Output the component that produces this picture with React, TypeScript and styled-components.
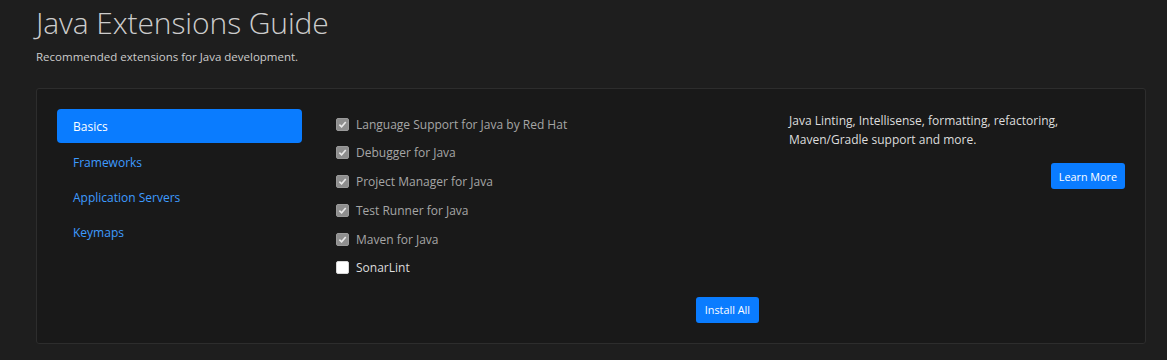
import React from "react"
import styled, { createGlobalStyle } from "styled-components"

const GlobalStyle = createGlobalStyle`
    body {
        margin: 0;
        background: #1e1e1e;
        color: #cccccc;
        font-family: "Open Sans", "Noto Sans", sans-serif;
        font-size: 13px;
    }
`

const Page = styled.div`
    padding: 0 21px 0 36px;
`

const Title = styled.h1`
    margin: 0;
    padding-top: 4px;
    font-size: 30px;
    font-weight: 300;
    line-height: 38px;
    color: #cccccc;
    letter-spacing: -0.1px;
`

const Subtitle = styled.p`
    margin: 7px 0 0;
    font-size: 11.5px;
    line-height: 16px;
    color: #cccccc;
`

const Card = styled.div`
    margin-top: 23px;
    height: 256px;
    box-sizing: border-box;
    background: #191919;
    border: 1px solid #2d2d2d;
    border-radius: 3px;
    padding: 20px 20px;
    display: flex;
`

const Nav = styled.nav`
    width: 245px;
    flex-shrink: 0;
    display: flex;
    flex-direction: column;
    gap: 1px;
`

const NavItem = styled.a<{ $active?: boolean }>`
    display: block;
    height: 34px;
    line-height: ${p => (p.$active ? "36px" : "37px")};
    padding: 0 16px;
    border-radius: 4px;
    font-size: 12px;
    text-decoration: none;
    color: ${p => (p.$active ? "#ffffff" : "#3e9bff")};
    background: ${p => (p.$active ? "#0a7cff" : "transparent")};
`

const Middle = styled.div`
    margin-left: 34px;
    width: 423px;
    flex-shrink: 0;
    display: flex;
    flex-direction: column;
    padding-top: 5px;
`

const CheckList = styled.ul`
    list-style: none;
    margin: 0;
    padding: 0;
    display: flex;
    flex-direction: column;
    gap: 8.8px;
`

const CheckRow = styled.li<{ $disabled?: boolean }>`
    display: flex;
    align-items: center;
    height: 20px;
    font-size: 12px;
    color: ${p => (p.$disabled ? "#a6a6a6" : "#dddddd")};
`

const Box = styled.span<{ $checked?: boolean }>`
    width: 13px;
    height: 13px;
    box-sizing: border-box;
    margin-right: 7px;
    border-radius: 2px;
    display: inline-flex;
    align-items: center;
    justify-content: center;
    background: ${p => (p.$checked ? "#8e8e8e" : "#ffffff")};
    border: 1px solid ${p => (p.$checked ? "#9a9a9a" : "#d6d6d6")};
`

const ButtonRow = styled.div`
    display: flex;
    justify-content: flex-end;
    margin-top: 19px;
`

const Button = styled.button<{ $pad: number }>`
    height: 26px;
    padding: 0 ${p => p.$pad}px;
    border: none;
    border-radius: 3px;
    background: #0a7cff;
    color: #ffffff;
    font-family: inherit;
    font-size: 10.8px;
`

const Right = styled.div`
    margin-left: 30px;
    width: 336px;
    flex-shrink: 0;
    display: flex;
    flex-direction: column;
    padding-top: 2px;
`

const Blurb = styled.p`
    margin: 0;
    font-size: 12px;
    line-height: 19px;
    color: #dddddd;
`

const RightButtons = styled.div`
    display: flex;
    justify-content: flex-end;
    margin-top: 14px;
`

const extensions = [
    "Language Support for Java by Red Hat",
    "Debugger for Java",
    "Project Manager for Java",
    "Test Runner for Java",
    "Maven for Java",
]

const Check = () => (
    <svg width="9" height="9" viewBox="0 0 10 10">
        <path d="M1.5 5.2 L4 7.6 L8.6 2.2" fill="none" stroke="#e8e8e8" strokeWidth="1.8" />
    </svg>
)

export default function App() {
    const tabs = ["Basics", "Frameworks", "Application Servers", "Keymaps"]
    return (
        <Page>
            <GlobalStyle />
            <Title>Java Extensions Guide</Title>
            <Subtitle>Recommended extensions for Java development.</Subtitle>
            <Card>
                <Nav>
                    {tabs.map((t, i) => (
                        <NavItem key={t} $active={i === 0}>
                            {t}
                        </NavItem>
                    ))}
                </Nav>
                <Middle>
                    <CheckList>
                        {extensions.map(e => (
                            <CheckRow key={e} $disabled>
                                <Box $checked>
                                    <Check />
                                </Box>
                                {e}
                            </CheckRow>
                        ))}
                        <CheckRow>
                            <Box />
                            SonarLint
                        </CheckRow>
                    </CheckList>
                    <ButtonRow>
                        <Button $pad={9}>Install All</Button>
                    </ButtonRow>
                </Middle>
                <Right>
                    <Blurb>
                        Java Linting, Intellisense, formatting, refactoring,
                        <br />
                        Maven/Gradle support and more.
                    </Blurb>
                    <RightButtons>
                        <Button $pad={8}>Learn More</Button>
                    </RightButtons>
                </Right>
            </Card>
        </Page>
    )
}
